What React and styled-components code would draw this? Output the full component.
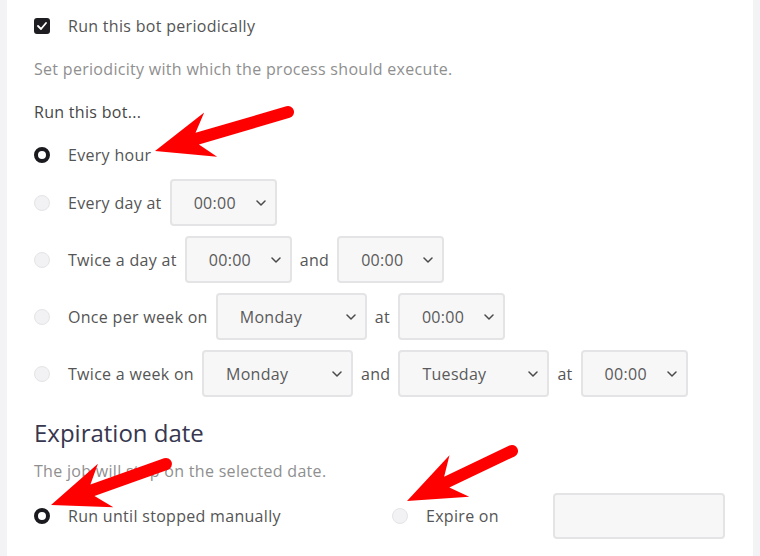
import React from "react";
import styled, { createGlobalStyle } from "styled-components";

const GlobalStyle = createGlobalStyle`
  html, body {
    margin: 0;
    padding: 0;
    background: #f3f3f6;
  }
  body {
    font-family: "Open Sans", "Liberation Sans", sans-serif;
    letter-spacing: 0.3px;
  }
`;

const arrows = [
  { tip: [155, 151], tail: [288, 112] },
  { tip: [51, 505], tail: [166, 464] },
  { tip: [407, 501], tail: [512, 451] },
];

function arrowPath(tip, tail) {
  const dx = tail[0] - tip[0];
  const dy = tail[1] - tip[1];
  const len = Math.sqrt(dx * dx + dy * dy);
  // local coords: tip at 0, tail at +len along x
  return {
    d: `M0 0 L58 -23 L44 -6 L${len} -6 A6 6 0 0 1 ${len} 6 L44 6 L58 23 Z`,
    angle: (Math.atan2(dy, dx) * 180) / Math.PI,
  };
}

function Chevron() {
  return (
    <svg width="10" height="6" viewBox="0 0 10 6">
      <polyline
        points="1,1 5,5 9,1"
        fill="none"
        stroke="#4a4a4a"
        strokeWidth="1.5"
        strokeLinecap="round"
        strokeLinejoin="round"
      />
    </svg>
  );
}

function Select({ value, wide }) {
  return (
    <SelectBox $wide={wide}>
      <span>{value}</span>
      <Chevron />
    </SelectBox>
  );
}

function App() {
  return (
    <Page>
      <GlobalStyle />
      <Panel>
        <CheckRow>
          <CheckBox>
            <svg width="10" height="8" viewBox="0 0 10 8">
              <polyline
                points="1,4 4,7 9,1"
                fill="none"
                stroke="#fff"
                strokeWidth="1.8"
                strokeLinecap="round"
                strokeLinejoin="round"
              />
            </svg>
          </CheckBox>
          <Label>Run this bot periodically</Label>
        </CheckRow>
        <Description>Set periodicity with which the process should execute.</Description>
        <GroupTitle>Run this bot...</GroupTitle>

        <RadioList>
          <Row>
            <Radio $checked />
            <Label>Every hour</Label>
          </Row>
          <Row>
            <Radio />
            <Label>Every day at</Label>
            <Select value="00:00" />
          </Row>
          <Row>
            <Radio />
            <Label>Twice a day at</Label>
            <Select value="00:00" />
            <Joiner>and</Joiner>
            <Select value="00:00" />
          </Row>
          <Row>
            <Radio />
            <Label>Once per week on</Label>
            <Select value="Monday" wide />
            <Joiner>at</Joiner>
            <Select value="00:00" />
          </Row>
          <Row>
            <Radio />
            <Label>Twice a week on</Label>
            <Select value="Monday" wide />
            <Joiner>and</Joiner>
            <Select value="Tuesday" wide />
            <Joiner>at</Joiner>
            <Select value="00:00" />
          </Row>
        </RadioList>

        <Heading>Expiration date</Heading>
        <SubText>The job will stop on the selected date.</SubText>
        <ExpiryRow>
          <Row>
            <Radio $checked />
            <Label>Run until stopped manually</Label>
          </Row>
          <Row>
            <Radio />
            <Label>Expire on</Label>
          </Row>
          <DateInput />
        </ExpiryRow>
      </Panel>

      <Annotations width="760" height="556" viewBox="0 0 760 556">
        {arrows.map((a, i) => {
          const { d, angle } = arrowPath(a.tip, a.tail);
          return (
            <path
              key={i}
              d={d}
              fill="#ff0000"
              transform={`translate(${a.tip[0]} ${a.tip[1]}) rotate(${angle})`}
            />
          );
        })}
      </Annotations>
    </Page>
  );
}

const Page = styled.div`
  position: relative;
  width: 760px;
  height: 556px;
  overflow: hidden;
`;

const Panel = styled.div`
  margin: 0 7px;
  height: 100%;
  box-sizing: border-box;
  background: #ffffff;
  padding: 14px 27px;
`;

const CheckRow = styled.div`
  display: flex;
  align-items: center;
  gap: 18px;
  height: 24px;
`;

const CheckBox = styled.div`
  width: 16px;
  height: 16px;
  border-radius: 3px;
  background: #1d1d22;
  display: flex;
  align-items: center;
  justify-content: center;
  flex-shrink: 0;
`;

const Label = styled.span`
  font-size: 16px;
  color: #555555;
  white-space: nowrap;
`;

const Description = styled.p`
  margin: 19px 0 0;
  font-size: 16px;
  line-height: 24px;
  color: #8f8f8f;
`;

const GroupTitle = styled.p`
  margin: 19px 0 0;
  font-size: 16px;
  line-height: 24px;
  color: #474747;
`;

const RadioList = styled.div`
  display: flex;
  flex-direction: column;
  gap: 10px;
  margin-top: 16px;
`;

const Row = styled.div`
  display: flex;
  align-items: center;
  min-height: 29px;
  gap: 8px;
`;

const Radio = styled.span`
  width: 16px;
  height: 16px;
  box-sizing: border-box;
  border-radius: 50%;
  flex-shrink: 0;
  margin-right: 10px;
  background: ${(p) => (p.$checked ? "#ffffff" : "#f2f2f4")};
  border: ${(p) => (p.$checked ? "4.5px solid #1a1a1f" : "1px solid #e4e4e7")};
`;

const SelectBox = styled.div`
  display: flex;
  align-items: center;
  justify-content: space-between;
  box-sizing: border-box;
  width: ${(p) => (p.$wide ? "151px" : "107px")};
  height: 47px;
  padding: 0 9px 0 22px;
  background: #f7f7f8;
  border: 2px solid #e4e4e7;
  border-radius: 4px;
  font-size: 16px;
  color: #5a5a5a;
`;

const Joiner = styled.span`
  font-size: 16px;
  color: #555555;
`;

const Heading = styled.h2`
  margin: 20px 0 0;
  font-size: 24px;
  line-height: 32px;
  font-weight: 400;
  letter-spacing: 0;
  color: #37374f;
`;

const SubText = styled.p`
  margin: 10px 0 0;
  font-size: 16px;
  line-height: 24px;
  color: #8f8f8f;
`;

const ExpiryRow = styled.div`
  display: grid;
  grid-template-columns: 358px 161px 172px;
  align-items: center;
  margin-top: 10px;
`;

const DateInput = styled.div`
  box-sizing: border-box;
  height: 46px;
  background: #f7f7f8;
  border: 2px solid #e4e4e7;
  border-radius: 4px;
`;

const Annotations = styled.svg`
  position: absolute;
  top: 0;
  left: 0;
  pointer-events: none;
`;

export default App;
